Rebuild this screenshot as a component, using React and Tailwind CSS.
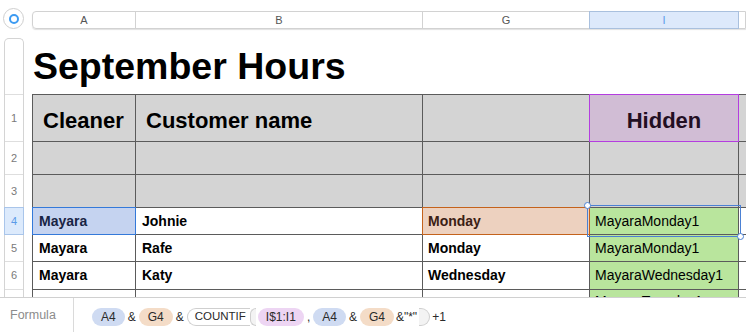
import React from "react";

function Cell({ w, bg = "", className = "", children }) {
  return (
    <div
      className={`${w} ${bg} shrink-0 relative flex items-center border-r border-b border-[#5b5b5b] ${className}`}
    >
      {children}
    </div>
  );
}

function Pill({ bg, children }) {
  return (
    <span className={`${bg} h-[18px] px-[9px] rounded-full flex items-center`}>
      {children}
    </span>
  );
}

const bodyRows = [
  { n: 4, h: "h-[27px]", cells: ["Mayara", "Johnie", "Monday", "MayaraMonday1"], active: true },
  { n: 5, h: "h-[27px]", cells: ["Mayara", "Rafe", "Monday", "MayaraMonday1"] },
  { n: 6, h: "h-[28px]", cells: ["Mayara", "Katy", "Wednesday", "MayaraWednesday1"] },
  { n: 7, h: "h-[28px]", cells: ["", "", "", "MayaraTuesday1"] },
];

export default function App() {
  return (
    <div className="w-[746px] h-[332px] overflow-hidden bg-white flex flex-col font-['Liberation_Sans',Arial,sans-serif]">
      {/* column headers */}
      <div className="h-[38px] shrink-0 flex items-start">
        <div className="ml-[3px] mt-[8px] w-[21px] h-[21px] shrink-0 rounded-full border border-[#cfcfcf] bg-white flex items-center justify-center">
          <div className="w-[10px] h-[10px] rounded-full border-2 border-[#3d9bf2]" />
        </div>
        <div className="ml-[8px] mt-[11px] flex-1 h-[18px] flex border border-[#d2d2d2] rounded-l-[4px] shadow-[0_1px_1px_rgba(0,0,0,0.12)] text-[11px] text-[#555]">
          <div className="w-[103px] shrink-0 border-r border-[#d2d2d2] flex items-center justify-center">A</div>
          <div className="w-[287px] shrink-0 border-r border-[#d2d2d2] flex items-center justify-center">B</div>
          <div className="w-[167px] shrink-0 border-r border-[#a9c0de] flex items-center justify-center">G</div>
          <div className="w-[149px] shrink-0 relative border-r border-[#a9c0de] bg-[#dde9fb] flex items-center justify-center text-[#5c9cea]">
            <span className="absolute -left-px -right-px -top-px -bottom-px border border-[#a9c0de]" />
            I
          </div>
          <div className="flex-1" />
        </div>
      </div>

      {/* sheet */}
      <div className="h-[259px] shrink-0 flex overflow-hidden">
        <div className="ml-[4px] w-[20px] shrink-0 border-x border-t border-[#d4d4d4] rounded-t-[5px] flex flex-col bg-white text-[11px] text-[#7a7a7a]">
          <div className="h-[56px] shrink-0 border-b border-[#dedede]" />
          <div className="h-[47px] shrink-0 border-b border-[#dedede] flex items-center justify-center">1</div>
          <div className="h-[33px] shrink-0 border-b border-[#dedede] flex items-center justify-center">2</div>
          <div className="h-[33px] shrink-0 border-b border-[#dedede] flex items-center justify-center">3</div>
          {bodyRows.map((r) => (
            <div
              key={r.n}
              className={`${r.h} shrink-0 relative border-b flex items-center justify-center ${
                r.active ? "bg-[#dceafc] text-[#5b9be8] border-[#a9c5ea]" : "border-[#dedede]"
              }`}
            >
              {r.active && (
                <span className="absolute -left-px -right-px -top-px -bottom-px border border-[#a9c5ea]" />
              )}
              {r.n < 7 ? r.n : ""}
            </div>
          ))}
        </div>

        <div className="ml-[8px] flex-1 min-w-0 flex flex-col">
          <div className="h-[56px] shrink-0 pt-[10px] pl-px text-[37.5px] leading-[37px] font-bold text-black whitespace-nowrap">
            September Hours
          </div>

          <div className="border-t border-l border-[#5b5b5b] text-black">
            {/* row 1 */}
            <div className="flex h-[47px]">
              <Cell w="w-[103px]" bg="bg-[#d4d4d4]" className="pl-[10px] pt-[4px] text-[22px] font-bold">
                Cleaner
              </Cell>
              <Cell w="w-[287px]" bg="bg-[#d4d4d4]" className="pl-[10px] pt-[4px] text-[22px] font-bold">
                Customer name
              </Cell>
              <Cell w="w-[167px]" bg="bg-[#d4d4d4]" />
              <Cell w="w-[149px]" bg="bg-[#d1bdd5]" className="justify-center pt-[4px] text-[22px] font-bold text-[#230f23]">
                <span className="absolute -left-px -right-px -top-px -bottom-px border border-[#b43de0]" />
                Hidden
              </Cell>
              <div className="flex-1 bg-[#d4d4d4] border-b border-[#5b5b5b]" />
            </div>
            {/* rows 2-3 */}
            {[2, 3].map((n) => (
              <div key={n} className="flex h-[33px]">
                <Cell w="w-[103px]" bg="bg-[#d4d4d4]" />
                <Cell w="w-[287px]" bg="bg-[#d4d4d4]" />
                <Cell w="w-[167px]" bg="bg-[#d4d4d4]" />
                <Cell w="w-[149px]" bg="bg-[#d4d4d4]" />
                <div className="flex-1 bg-[#d4d4d4] border-b border-[#5b5b5b]" />
              </div>
            ))}
            {/* data rows */}
            {bodyRows.map((r) => (
              <div key={r.n} className={`flex ${r.h}`}>
                <Cell
                  w="w-[103px]"
                  bg={r.active ? "bg-[#c5d3f0]" : "bg-white"}
                  className={`pl-[6px] text-[14px] font-bold ${r.active ? "text-[#182444]" : ""}`}
                >
                  {r.active && (
                    <span className="absolute -left-px -right-px -top-px -bottom-px border border-[#3479d9]" />
                  )}
                  <span className="relative">{r.cells[0]}</span>
                </Cell>
                <Cell w="w-[287px]" bg="bg-white" className="pl-[6px] text-[14px] font-bold">
                  {r.cells[1]}
                </Cell>
                <Cell
                  w="w-[167px]"
                  bg={r.active ? "bg-[#edd1bf]" : "bg-white"}
                  className={`pl-[5px] text-[14px] font-bold ${r.active ? "text-[#3b2014]" : ""}`}
                >
                  {r.active && (
                    <span className="absolute -left-px -right-px -top-px -bottom-px border border-[#c4621c]" />
                  )}
                  <span className="relative">{r.cells[2]}</span>
                </Cell>
                <Cell
                  w="w-[149px]"
                  bg="bg-[#b9e59d]"
                  className={`pl-[5px] text-[14px] ${r.n === 7 ? "items-start pt-[1px]" : ""}`}
                >
                  {r.cells[3]}
                  {r.active && (
                    <span className="absolute -left-[3px] -right-[3px] -top-[3px] -bottom-[3px] border-[1.5px] border-[#4b81d4] z-10">
                      <span className="absolute -left-[4px] -top-[4px] w-[7px] h-[7px] rounded-full bg-white border border-[#4b81d4]" />
                      <span className="absolute -right-[4px] -bottom-[4px] w-[7px] h-[7px] rounded-full bg-white border border-[#4b81d4]" />
                    </span>
                  )}
                </Cell>
                <div className="flex-1 bg-white border-b border-[#5b5b5b]" />
              </div>
            ))}
          </div>
        </div>
      </div>

      {/* formula bar */}
      <div className="h-[35px] shrink-0 border-t border-[#d0d0d0] flex bg-white">
        <div className="w-[74px] h-full border-r border-[#dadada] flex items-center pl-[10px] text-[12.5px] text-[#8c8c8c]">
          Formula
        </div>
        <div className="pl-[18px] pt-[4px] flex items-center gap-[2px] text-[12px] text-[#2a2a2a] whitespace-nowrap">
          <Pill bg="bg-[#cfdbf2]">A4</Pill>
          <span className="px-[1px]">&amp;</span>
          <Pill bg="bg-[#f4dcc7]">G4</Pill>
          <span className="px-[1px]">&amp;</span>
          <span className="flex items-center">
            <span className="h-[18px] pl-[7px] pr-[4px] flex items-center rounded-l-full border-y border-l border-[#cfcfcf] text-[11.5px]">
              COUNTIF
            </span>
            <span className="w-[6px] h-[18px] rounded-l-full border-l border-y border-[#cfcfcf] bg-[#f3f3f3]" />
          </span>
          <span className="px-[8px] h-[18px] rounded-full bg-[#edd5f3] flex items-center">I$1:I1</span>
          <span className="px-[1px]">,</span>
          <Pill bg="bg-[#cfdbf2]">A4</Pill>
          <span className="px-[1px]">&amp;</span>
          <Pill bg="bg-[#f4dcc7]">G4</Pill>
          <span>&amp;"*"</span>
          <span className="w-[11px] h-[18px] rounded-r-full border-r border-y border-[#cfcfcf] bg-[#f3f3f3]" />
          <span>+1</span>
        </div>
      </div>
    </div>
  );
}
